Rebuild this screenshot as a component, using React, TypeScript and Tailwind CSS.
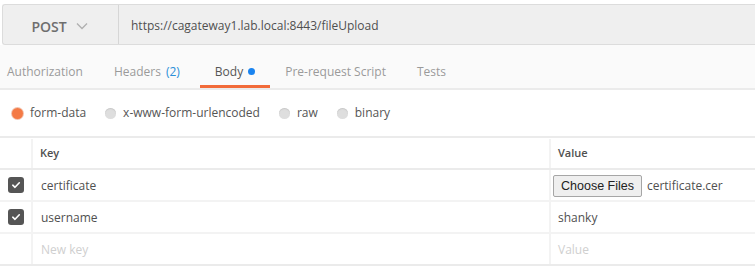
import React from 'react';

const tabs = [
  { label: 'Authorization', left: 7 },
  { label: 'Headers', left: 31, count: '(2)' },
  { label: 'Body', left: 20, active: true },
  { label: 'Pre-request Script', left: 15 },
  { label: 'Tests', left: 31 },
];

const modes = [
  { label: 'form-data', on: true },
  { label: 'x-www-form-urlencoded' },
  { label: 'raw' },
  { label: 'binary' },
];

const Check = () => (
  <span className="flex h-[16px] w-[16px] items-center justify-center rounded-[3px] bg-[#555555]">
    <svg width="10" height="10" viewBox="0 0 10 10" fill="none">
      <path d="M1.8 5.2 L4 7.3 L8.3 2.8" stroke="white" strokeWidth="1.6" strokeLinecap="round" strokeLinejoin="round" />
    </svg>
  </span>
);

export default function App() {
  return (
    <div className="h-[268px] w-[755px] overflow-hidden bg-white font-['Open_Sans',sans-serif] text-[12px] text-[#505050]">
      {/* request bar */}
      <div className="pl-[2px] pt-[4px]">
        <div className="flex h-[41px] rounded-l-[3px] border border-r-0 border-[#dcdcdc] bg-[#efefef] pt-[3px]">
          <div className="-mt-[3px] flex w-[116px] items-center justify-center gap-[9px] border-r border-[#d6d6d6] pt-[3px] pr-[2px]">
            <span className="text-[14px] font-semibold text-[#6e6e6e]">POST</span>
            <svg width="12" height="8" viewBox="0 0 12 8" fill="none">
              <path d="M1 1.5 L6 6.5 L11 1.5" stroke="#b0b0b0" strokeWidth="1.3" />
            </svg>
          </div>
          <div className="flex items-center pl-[12px] text-[12px] text-[#505050]">
            https://cagateway1.lab.local:8443/fileUpload
          </div>
        </div>
      </div>

      {/* tabs */}
      <div className="flex h-[45px] items-stretch border-b-2 border-[#ebebeb] bg-[#fafafa] text-[12px] text-[#9a9a9a]">
        {tabs.map((t) => (
          <div
            key={t.label}
            style={{ marginLeft: t.left }}
            className={
              t.active
                ? 'flex items-center border-b-[3px] border-[#f26b3a] px-[15px] pt-[13px] text-[#555555]'
                : 'flex items-center pt-[10px]'
            }
          >
            {t.label}
            {t.count && <span className="ml-[5px] text-[#2b8fd8]">{t.count}</span>}
            {t.active && <span className="ml-[5px] h-[7px] w-[7px] rounded-full bg-[#1a84f0]" />}
          </div>
        ))}
      </div>

      {/* body modes */}
      <div className="flex h-[46px] items-center gap-[19px] pl-[12px] text-[12px] text-[#555555]">
        {modes.map((m) => (
          <div key={m.label} className="flex items-center gap-[7px]">
            <span
              className={
                m.on
                  ? 'flex h-[11px] w-[11px] items-center justify-center rounded-full bg-[#f47a45] shadow-[0_0_0_1px_#f3c2ad]'
                  : 'h-[11px] w-[11px] rounded-full bg-[#dedede] shadow-[inset_0_1px_1px_#c8c8c8]'
              }
            />
            <span>{m.label}</span>
          </div>
        ))}
      </div>

      {/* params table */}
      <div className="border-y-2 border-[#ebebeb]">
        <div className="grid h-[32px] grid-cols-[33px_518px_1fr] border-b-2 border-[#ebebeb] pt-[1px] text-[11px] font-semibold text-[#505050]">
          <div className="border-r-2 border-[#f3f3f3]" />
          <div className="flex items-center border-r-2 border-[#f3f3f3] pl-[7px]">Key</div>
          <div className="flex items-center pl-[7px]">Value</div>
        </div>
        <div className="grid h-[32px] grid-cols-[33px_518px_1fr] border-b-2 border-[#f3f3f3] text-[12px]">
          <div className="flex items-center justify-center border-r-2 border-[#f3f3f3] pl-[1px]">
            <Check />
          </div>
          <div className="flex items-center border-r-2 border-[#f3f3f3] pl-[8px] pt-[2px]">certificate</div>
          <div className="flex items-center gap-[5px] pl-[2px] pt-[2px]">
            <span className="rounded-[2px] border border-[#a6a6a6] bg-[#efefef] px-[7px] py-[1px] font-['Liberation_Sans',Arial,sans-serif] text-[12.5px] text-[#222]">
              Choose Files
            </span>
            <span>certificate.cer</span>
          </div>
        </div>
        <div className="grid h-[32px] grid-cols-[33px_518px_1fr] border-b-2 border-[#f3f3f3] text-[12px]">
          <div className="flex items-center justify-center border-r-2 border-[#f3f3f3] pl-[1px]">
            <Check />
          </div>
          <div className="flex items-center border-r-2 border-[#f3f3f3] pl-[8px] pt-[2px]">username</div>
          <div className="flex items-center pl-[7px] pt-[2px]">shanky</div>
        </div>
        <div className="grid h-[30px] grid-cols-[33px_518px_1fr] text-[12px] text-[#cfcfcf]">
          <div className="border-r-2 border-[#f3f3f3]" />
          <div className="flex items-center border-r-2 border-[#f3f3f3] pl-[8px] pt-[2px]">New key</div>
          <div className="flex items-center pl-[7px] pt-[2px]">Value</div>
        </div>
      </div>
    </div>
  );
}
